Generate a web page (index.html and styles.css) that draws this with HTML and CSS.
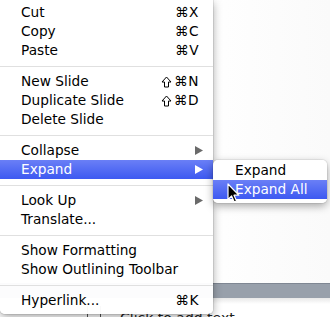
FILE: index.html
```html
<!DOCTYPE html>
<html>
<head>
<meta charset="utf-8">
<link rel="stylesheet" href="styles.css">
</head>
<body>
<div class="stage">
  <div class="doc">
    <div class="doc-top"></div>
    <div class="doc-bar"></div>
    <div class="doc-bottom">
      <span class="guide"></span><span class="guide"></span>
      <span class="placeholder">Click to add text</span>
    </div>
  </div>

  <div class="menu">
    <div class="item"><span>Cut</span><span class="key">⌘X</span></div>
    <div class="item"><span>Copy</span><span class="key">⌘C</span></div>
    <div class="item"><span>Paste</span><span class="key">⌘V</span></div>
    <div class="sep"></div>
    <div class="item"><span>New Slide</span><span class="key"><svg class="shift" width="11" height="12" viewBox="0 0 11 12"><path d="M5.5 1 L10 6 L7.5 6 L7.5 11 L3.5 11 L3.5 6 L1 6 Z"/></svg>⌘N</span></div>
    <div class="item"><span>Duplicate Slide</span><span class="key"><svg class="shift" width="11" height="12" viewBox="0 0 11 12"><path d="M5.5 1 L10 6 L7.5 6 L7.5 11 L3.5 11 L3.5 6 L1 6 Z"/></svg>⌘D</span></div>
    <div class="item"><span>Delete Slide</span></div>
    <div class="sep"></div>
    <div class="item sub"><span>Collapse</span><svg class="arrow" width="8" height="9" viewBox="0 0 8 9"><path d="M0 0 L8 4.5 L0 9 Z"/></svg></div>
    <div class="item sub active"><span>Expand</span><svg class="arrow" width="8" height="9" viewBox="0 0 8 9"><path d="M0 0 L8 4.5 L0 9 Z"/></svg></div>
    <div class="sep"></div>
    <div class="item sub"><span>Look Up</span><svg class="arrow" width="8" height="9" viewBox="0 0 8 9"><path d="M0 0 L8 4.5 L0 9 Z"/></svg></div>
    <div class="item"><span>Translate...</span></div>
    <div class="sep"></div>
    <div class="item"><span>Show Formatting</span></div>
    <div class="item"><span>Show Outlining Toolbar</span></div>
    <div class="sep"></div>
    <div class="item"><span>Hyperlink...</span><span class="key">⌘K</span></div>
  </div>

  <div class="submenu">
    <div class="sitem">Expand</div>
    <div class="sitem active">Expand All</div>
  </div>

  <svg class="cursor" width="13" height="20" viewBox="0 0 13 20">
    <path d="M1 1 L1 16.5 L4.6 13 L7.2 19 L9.6 18 L7 12.2 L11.8 12.2 Z" fill="#000" stroke="#fff" stroke-width="1.2" stroke-linejoin="round"/>
  </svg>
</div>
</body>
</html>
```

FILE: styles.css
```css
html, body {
  margin: 0;
  padding: 0;
  background: #fff;
}
body {
  width: 330px;
  height: 317px;
  overflow: hidden;
  font-family: "DejaVu Sans", "Liberation Sans", sans-serif;
  font-size: 13.7px;
  color: #000;
}
.stage {
  position: relative;
  width: 330px;
  height: 317px;
  overflow: hidden;
}
.doc {
  display: flex;
  flex-direction: column;
}
.doc-top {
  height: 283px;
  background: linear-gradient(90deg, #fff 0, #fff 60%, #fafafa 100%);
}
.doc-bar {
  height: 15px;
  background: #98a0ab;
  border-top: 1px solid #7f8793;
  box-sizing: border-box;
}
.doc-bottom {
  height: 19px;
  display: flex;
  align-items: flex-start;
  padding-top: 8px;
  background: linear-gradient(#e8e8e8, #fff 6px);
  box-sizing: border-box;
}
.guide {
  width: 1px;
  height: 12px;
  background: #555;
  margin-left: 87px;
}
.guide + .guide {
  margin-left: 12px;
}
.placeholder {
  margin-left: 19px;
  margin-top: 5px;
  font-size: 14px;
  line-height: 14px;
  color: #222;
}

.menu {
  position: absolute;
  left: 0;
  top: 0;
  width: 213px;
  padding: 3px 0 4px;
  background: rgba(255, 255, 255, 0.97);
  border-radius: 0 0 5px 5px;
  box-shadow: 0 3px 10px rgba(0, 0, 0, 0.35), 0 0 0 1px rgba(0, 0, 0, 0.08);
}
.item {
  height: 19px;
  line-height: 19px;
  display: flex;
  justify-content: space-between;
  align-items: center;
  padding: 0 14px 0 21px;
  white-space: nowrap;
}
.item.sub {
  padding-right: 10px;
}
.key {
  display: flex;
  align-items: center;
  letter-spacing: 0.5px;
}
.shift {
  margin-right: 2px;
  fill: none;
  stroke: #000;
  stroke-width: 1;
  stroke-linejoin: miter;
}
.arrow {
  fill: #6a6a6a;
}
.active {
  background: linear-gradient(#6a7ff6, #3d59f1);
  color: #fff;
}
.active .arrow {
  fill: #fff;
}
.sep {
  height: 1px;
  background: #e0e0e0;
  margin: 6px 0 5px;
}

.submenu {
  position: absolute;
  left: 213px;
  top: 160px;
  width: 114px;
  padding: 1px 0 4px;
  background: rgba(255, 255, 255, 0.98);
  border-radius: 5px;
  box-shadow: 0 3px 9px rgba(0, 0, 0, 0.35), 0 0 0 1px rgba(0, 0, 0, 0.06);
}
.sitem {
  height: 19px;
  line-height: 19px;
  padding-left: 22px;
  white-space: nowrap;
}
.cursor {
  position: absolute;
  left: 227px;
  top: 183px;
}
```
